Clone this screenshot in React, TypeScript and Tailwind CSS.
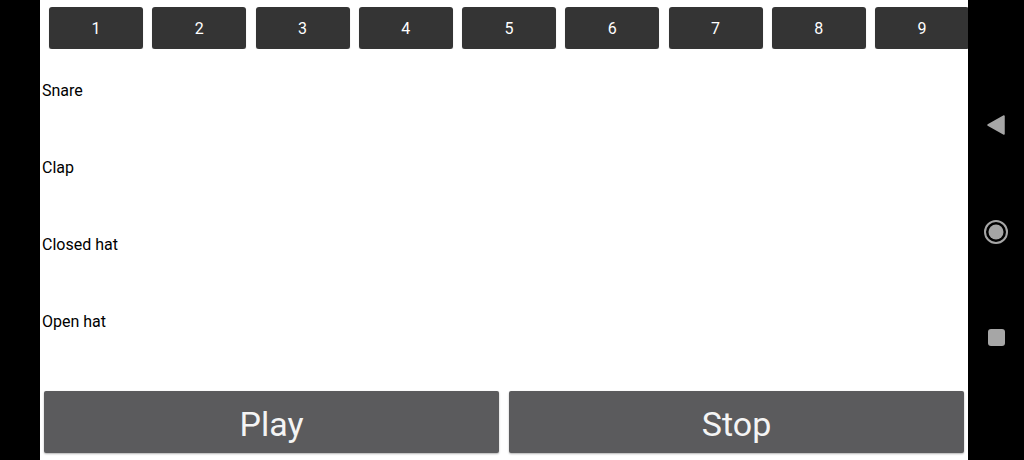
import React from "react";

const steps = Array.from({ length: 9 }, (_, i) => i + 1);
const tracks = ["Snare", "Clap", "Closed hat", "Open hat"];

export default function App() {
  return (
    <div
      className="flex h-[460px] w-[1024px] overflow-hidden bg-black"
      style={{ fontFamily: "Roboto, 'Liberation Sans', sans-serif" }}
    >
      <div className="w-[40px] shrink-0 bg-black" />
      <div className="flex w-[928px] shrink-0 flex-col bg-white">
        <div className="flex gap-[9.25px] overflow-hidden pl-[9px] pt-[7px]">
          {steps.map((n) => (
            <div
              key={n}
              className="flex h-[42px] w-[94px] shrink-0 items-center justify-center rounded-[3px] bg-[#343434] pt-[2px] text-[16px] text-white shadow-[0_1px_1px_rgba(0,0,0,0.25)]"
            >
              {n}
            </div>
          ))}
        </div>
        <div className="mt-[30px] flex flex-col pl-[2px]">
          {tracks.map((t) => (
            <div key={t} className="h-[77px] text-[16px] leading-[24px] text-black">
              {t}
            </div>
          ))}
        </div>
        <div className="mt-auto flex gap-[10px] px-[4px] pb-[7px]">
          <div className="flex h-[62px] flex-1 items-center justify-center rounded-[2px] bg-[#5b5b5d] pt-[4px] text-[34px] text-[#f4f4f4] shadow-[0_1px_2px_rgba(0,0,0,0.3)]">
            Play
          </div>
          <div className="flex h-[62px] flex-1 items-center justify-center rounded-[2px] bg-[#5b5b5d] pt-[4px] text-[34px] text-[#f4f4f4] shadow-[0_1px_2px_rgba(0,0,0,0.3)]">
            Stop
          </div>
        </div>
      </div>
      <div className="flex w-[56px] shrink-0 flex-col items-center bg-black">
        <div className="mt-[114px] flex h-[22px] items-center justify-center">
          <svg width="18" height="20" viewBox="0 0 18 20">
            <path d="M17 1 L17 19 L1 10 Z" fill="#a6a6a6" stroke="#a6a6a6" strokeWidth="1.5" strokeLinejoin="round" />
          </svg>
        </div>
        <div className="mt-[83px] flex items-center justify-center">
          <svg width="26" height="26" viewBox="0 0 26 26">
            <circle cx="13" cy="13" r="11" fill="none" stroke="#a6a6a6" strokeWidth="2" />
            <circle cx="13" cy="13" r="7.5" fill="#a6a6a6" />
          </svg>
        </div>
        <div className="mt-[84px] h-[17px] w-[17px] rounded-[3px] bg-[#a6a6a6]" />
      </div>
    </div>
  );
}
